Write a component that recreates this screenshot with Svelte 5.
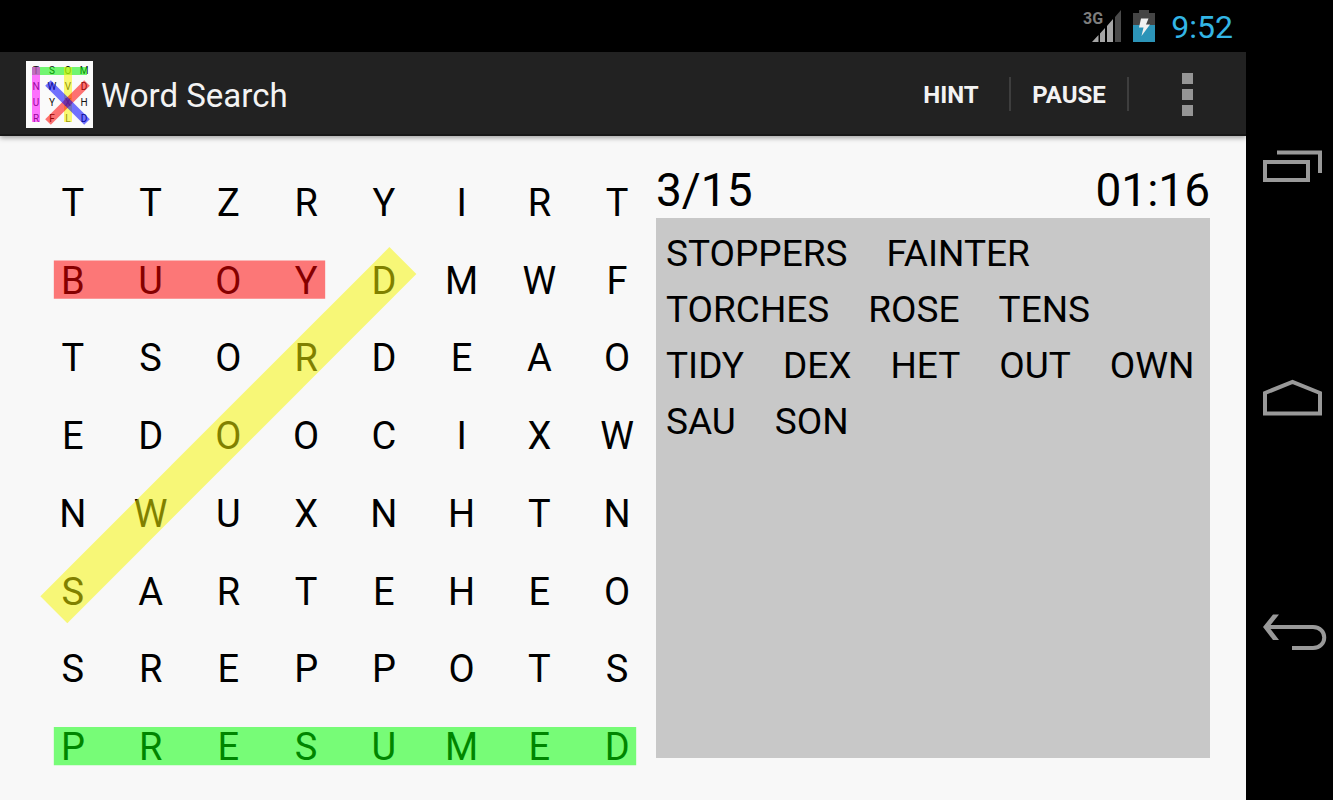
<script>
	const rows = [
		'TTZRYIRT',
		'BUOYDMWF',
		'TSORDEAO',
		'EDOOCIXW',
		'NWUXNHTN',
		'SARTEHEO',
		'SREPPOTS',
		'PRESUMED'
	];

	// start and end cells of the words found so far
	const found = [
		{ word: 'BUOY', from: [0, 1], to: [3, 1], color: '#ff0000' },
		{ word: 'DROWS', from: [4, 1], to: [0, 5], color: '#f5f500' },
		{ word: 'PRESUMED', from: [0, 7], to: [7, 7], color: '#00ff00' }
	];

	const words = [
		'STOPPERS', 'FAINTER', 'TORCHES', 'ROSE', 'TENS', 'TIDY',
		'DEX', 'HET', 'OUT', 'OWN', 'SAU', 'SON'
	];

	const total = found.length + words.length;

	const logoRows = ['TSOM', 'NWVD', 'UYXH', 'RFLD'];

	// run each mark a quarter cell past the centres of its end letters
	function markLine({ from, to }) {
		const dx = Math.sign(to[0] - from[0]) * 0.245;
		const dy = Math.sign(to[1] - from[1]) * 0.245;
		return {
			x1: from[0] + 0.5 - dx,
			y1: from[1] + 0.5 - dy,
			x2: to[0] + 0.5 + dx,
			y2: to[1] + 0.5 + dy
		};
	}
</script>

<div class="device">
	<div class="screen">
		<div class="status-bar">
			<svg class="signal" viewBox="0 0 38 32" role="img" aria-label="3G signal">
				<text x="0" y="14">3G</text>
				<path fill="#a6a6a6" d="M9 32 15.500 25V32zM17 32V23.500L22 18V32zM24 32V16L30 9V32z" />
				<path fill="#4a4a4a" d="M32 32V7L38 0V32z" />
			</svg>
			<svg class="battery" viewBox="0 0 22 32" role="img" aria-label="Battery charging">
				<path fill="#454545" d="M6 0H16V3H22V15H0V3H6z" />
				<path fill="#2c94b8" d="M0 15H22V32H0z" />
				<path fill="#f1f1f1" d="M8 8.500H15.500L13 14.500H17L8.500 26 10.500 17.500H6z" />
			</svg>
			<span class="clock">9:52</span>
		</div>

		<header class="action-bar">
			<svg class="logo" viewBox="0 0 67 67" aria-hidden="true">
				<rect width="67" height="67" fill="#fafafa" />
				{#each logoRows as row, y}
					{#each row as letter, x}
						<text x={10 + x * 16} y={13 + y * 16}>{letter}</text>
					{/each}
				{/each}
				<g fill="none" stroke-width="8" stroke-opacity="0.55">
					<path stroke="#00f000" d="M6 10H61" />
					<path stroke="#ff00ff" d="M10 6V61" />
					<path stroke="#f5f500" d="M42 6V61" />
					<path stroke="#ff0000" d="M61 22 22 61" />
					<path stroke="#0000ff" d="M22 22 61 61" />
				</g>
			</svg>
			<h1>Word Search</h1>
			<button class="action">HINT</button>
			<button class="action">PAUSE</button>
			<button class="overflow" aria-label="More options">
				<i></i>
				<i></i>
				<i></i>
			</button>
		</header>

		<main>
			<div class="board">
				{#each rows as row}
					{#each row as letter}
						<span class="cell">{letter}</span>
					{/each}
				{/each}
				<svg class="marks" viewBox="0 0 8 8" aria-hidden="true">
					{#each found as mark (mark.word)}
						<line {...markLine(mark)} stroke={mark.color} />
					{/each}
				</svg>
			</div>

			<section class="side">
				<div class="progress">
					<span>{found.length}/{total}</span>
					<span>01:16</span>
				</div>
				<ul class="words">
					{#each words as word}
						<li>{word}</li>
					{/each}
				</ul>
			</section>
		</main>
	</div>

	<nav class="nav-bar">
		<button aria-label="Recent apps">
			<svg viewBox="0 0 68 68">
				<path d="M6 29H49V47H6zM18 19.500H61V40" />
			</svg>
		</button>
		<button aria-label="Home">
			<svg viewBox="0 0 68 68">
				<path d="M6 47.500V27L33.500 16 61 27V47.500z" />
			</svg>
		</button>
		<button aria-label="Back">
			<svg viewBox="0 0 68 68">
				<path d="M8 28H54C69 28 69 49 54 49H33" />
				<path class="solid" d="M4 28 14 15.500H20L10 28 20 41H14z" />
			</svg>
		</button>
	</nav>
</div>

<style>
	:global(body) {
		margin: 0;
		background: #000;
	}

	.device {
		display: grid;
		grid-template-columns: 1fr 87px;
		min-height: 100vh;
		font-family: Roboto, 'Liberation Sans', sans-serif;
		background: #000;
	}

	button {
		padding: 0;
		border: 0;
		background: none;
		color: inherit;
		font: inherit;
		cursor: pointer;
	}

	.screen {
		display: flex;
		flex-direction: column;
	}

	.status-bar {
		display: flex;
		align-items: center;
		justify-content: flex-end;
		gap: 12px;
		height: 52px;
		padding-right: 13px;
	}

	.signal {
		width: 38px;
		height: 32px;
		overflow: visible;
	}

	.signal text {
		font-size: 16px;
		font-weight: 700;
		fill: #7d7d7d;
	}

	.battery {
		width: 22px;
		height: 32px;
	}

	.clock {
		margin-left: 4px;
		padding-top: 2px;
		color: #33b5e5;
		font-size: 32px;
	}

	.action-bar {
		position: relative;
		display: flex;
		align-items: center;
		height: 84px;
		box-sizing: border-box;
		padding: 2px 0 0 26px;
		border-bottom: 2px solid #181818;
		background: #222;
		color: #f3f3f3;
		box-shadow: 0 2px 5px rgba(0, 0, 0, 0.35);
	}

	.logo {
		width: 67px;
		height: 67px;
	}

	.logo text {
		font-size: 10px;
		text-anchor: middle;
		fill: #111;
	}

	h1 {
		flex: 1;
		margin: 0 0 0 8px;
		padding-top: 2px;
		font-size: 33px;
		font-weight: 400;
	}

	.action {
		width: 118px;
		height: 34px;
		padding-top: 2px;
		border-right: 2px solid #3e3e3e;
		font-size: 24px;
		font-weight: 700;
	}

	.overflow {
		display: flex;
		flex-direction: column;
		align-items: center;
		gap: 5px;
		width: 117px;
	}

	.overflow i {
		width: 11px;
		height: 11px;
		background: #959595;
	}

	main {
		flex: 1;
		display: grid;
		grid-template-columns: 622fr 554fr;
		padding: 27px 36px 14px 34px;
		background: #f8f8f8;
		color: #000;
	}

	.board {
		position: relative;
		display: grid;
		grid-template-columns: repeat(8, 1fr);
		grid-template-rows: repeat(8, 1fr);
		align-self: start;
		aspect-ratio: 1;
		font-size: 38px;
	}

	.cell {
		display: flex;
		align-items: center;
		justify-content: center;
		padding-top: 2px;
		line-height: 1;
	}

	.marks {
		position: absolute;
		inset: 0;
		width: 100%;
		height: 100%;
		overflow: visible;
	}

	.marks line {
		stroke-width: 0.49;
		stroke-opacity: 0.52;
	}

	.side {
		display: flex;
		flex-direction: column;
		padding-bottom: 28px;
	}

	.progress {
		display: flex;
		justify-content: space-between;
		font-size: 46px;
		line-height: 55px;
	}

	.words {
		flex: 1;
		display: flex;
		flex-wrap: wrap;
		align-content: flex-start;
		column-gap: 39px;
		margin: 0;
		padding: 8px 10px;
		list-style: none;
		background: #c8c8c8;
		font-size: 37px;
		line-height: 56px;
	}

	.nav-bar {
		display: flex;
		flex-direction: column;
		padding: 50px 0;
	}

	.nav-bar button {
		flex: 1;
		display: flex;
		align-items: center;
		justify-content: center;
		padding-left: 6px;
	}

	.nav-bar svg {
		width: 68px;
		height: 68px;
		fill: none;
		stroke: #999;
		stroke-width: 4;
	}

	.nav-bar .solid {
		fill: #999;
		stroke: none;
	}
</style>
